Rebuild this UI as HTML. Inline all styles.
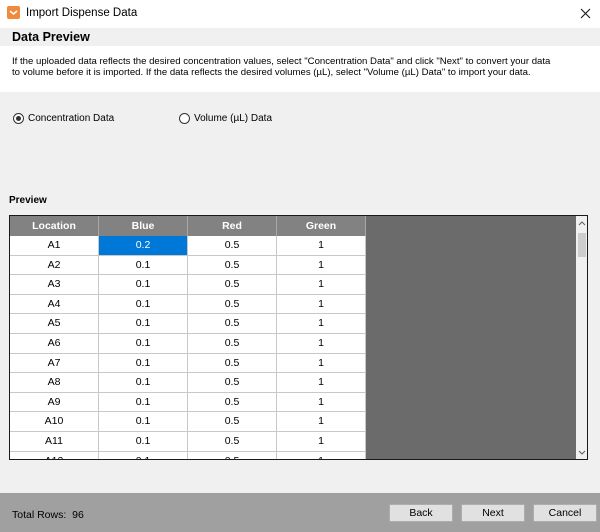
<!DOCTYPE html>
<html><head><style>
body{margin:0;width:600px;height:532px;position:relative;overflow:hidden;background:#f0f0f0;font-family:"Liberation Sans",Arial,sans-serif;font-size:11px;color:#000}
.a{position:absolute}
.grid{left:9px;top:215px;width:579px;height:245px;border:1px solid #1a1a1a;box-sizing:border-box;background:#6b6b6b;overflow:hidden}
.row{position:absolute;left:0;height:19.6px;display:flex}
.row div{width:88px;border-right:1px solid #c8c8c8;border-bottom:1px solid #c8c8c8;background:#fff;text-align:center;line-height:19px;font-size:10.5px;box-sizing:content-box}
.hdr div{background:#828282;color:#fff;font-weight:bold;border-right:1px solid #a8a8a8;border-bottom:1px solid #a8a8a8;height:20px;line-height:20px}
.btn{top:504px;height:18px;width:64px;background:#e1e1e1;border:1px solid #adadad;box-sizing:border-box;text-align:center;line-height:16px;font-size:10.5px}
</style></head><body>
<div class="a" style="left:0;top:0;width:600px;height:28px;background:#fff"></div>
<div class="a" style="left:7px;top:6px;width:13px;height:13px;background:#f08a3c;border-radius:2px"><svg width="13" height="13"><path d="M3 5 L6.5 8 L10 5" stroke="#fff" stroke-width="1.5" fill="none"/></svg></div>
<div class="a" style="left:26px;top:7px;font-size:11.5px">Import Dispense Data</div>
<svg class="a" style="left:580px;top:8px" width="11" height="11"><path d="M1 1L10 10M10 1L1 10" stroke="#222" stroke-width="1.2"/></svg>
<div class="a" style="left:12px;top:30px;font-size:12.5px;font-weight:bold">Data Preview</div>
<div class="a" style="left:0;top:46px;width:600px;height:46px;background:#fff"></div>
<div class="a" style="left:12px;top:56px;font-size:9.6px;line-height:11px;white-space:nowrap">If the uploaded data reflects the desired concentration values, select "Concentration Data" and click "Next" to convert your data<br>to volume before it is imported. If the data reflects the desired volumes (µL), select "Volume (µL) Data" to import your data.</div>
<div class="a" style="left:13px;top:113px;width:11px;height:11px;border:1px solid #333;border-radius:50%;box-sizing:border-box;background:#fff"><div class="a" style="left:2px;top:2px;width:5px;height:5px;border-radius:50%;background:#333"></div></div>
<div class="a" style="left:28px;top:113px;font-size:10px">Concentration Data</div>
<div class="a" style="left:179px;top:113px;width:11px;height:11px;border:1px solid #333;border-radius:50%;box-sizing:border-box;background:#fff"></div>
<div class="a" style="left:194px;top:113px;font-size:10px">Volume (µL) Data</div>
<div class="a" style="left:9px;top:195px;font-weight:bold;font-size:10px">Preview</div>
<div class="a grid">
<div class="row hdr" style="top:0"><div>Location</div><div>Blue</div><div>Red</div><div>Green</div></div>
<div class="row" style="top:20px"><div>A1</div><div style="background:#0078d7;color:#fff">0.2</div><div>0.5</div><div>1</div></div>
<div class="row" style="top:39.6px"><div>A2</div><div>0.1</div><div>0.5</div><div>1</div></div>
<div class="row" style="top:59.2px"><div>A3</div><div>0.1</div><div>0.5</div><div>1</div></div>
<div class="row" style="top:78.8px"><div>A4</div><div>0.1</div><div>0.5</div><div>1</div></div>
<div class="row" style="top:98.4px"><div>A5</div><div>0.1</div><div>0.5</div><div>1</div></div>
<div class="row" style="top:118px"><div>A6</div><div>0.1</div><div>0.5</div><div>1</div></div>
<div class="row" style="top:137.6px"><div>A7</div><div>0.1</div><div>0.5</div><div>1</div></div>
<div class="row" style="top:157.2px"><div>A8</div><div>0.1</div><div>0.5</div><div>1</div></div>
<div class="row" style="top:176.8px"><div>A9</div><div>0.1</div><div>0.5</div><div>1</div></div>
<div class="row" style="top:196.4px"><div>A10</div><div>0.1</div><div>0.5</div><div>1</div></div>
<div class="row" style="top:216px"><div>A11</div><div>0.1</div><div>0.5</div><div>1</div></div>
<div class="row" style="top:235.6px"><div>A12</div><div>0.1</div><div>0.5</div><div>1</div></div>
<div class="a" style="left:566px;top:0;width:12px;height:244px;background:#f0f0f0"></div>
<div class="a" style="left:568px;top:17px;width:8px;height:24px;background:#cdcdcd"></div>
<svg class="a" style="left:566px;top:2px" width="12" height="12"><path d="M3 7L6 4L9 7" stroke="#606060" fill="none"/></svg>
<svg class="a" style="left:566px;top:230px" width="12" height="12"><path d="M3 5L6 8L9 5" stroke="#606060" fill="none"/></svg>
</div>
<div class="a" style="left:0;top:493px;width:600px;height:39px;background:#a0a0a0"></div>
<div class="a" style="left:12px;top:509px;font-size:10.5px">Total Rows:&nbsp; 96</div>
<div class="a btn" style="left:389px">Back</div>
<div class="a btn" style="left:461px">Next</div>
<div class="a btn" style="left:533px">Cancel</div>
</body></html>
